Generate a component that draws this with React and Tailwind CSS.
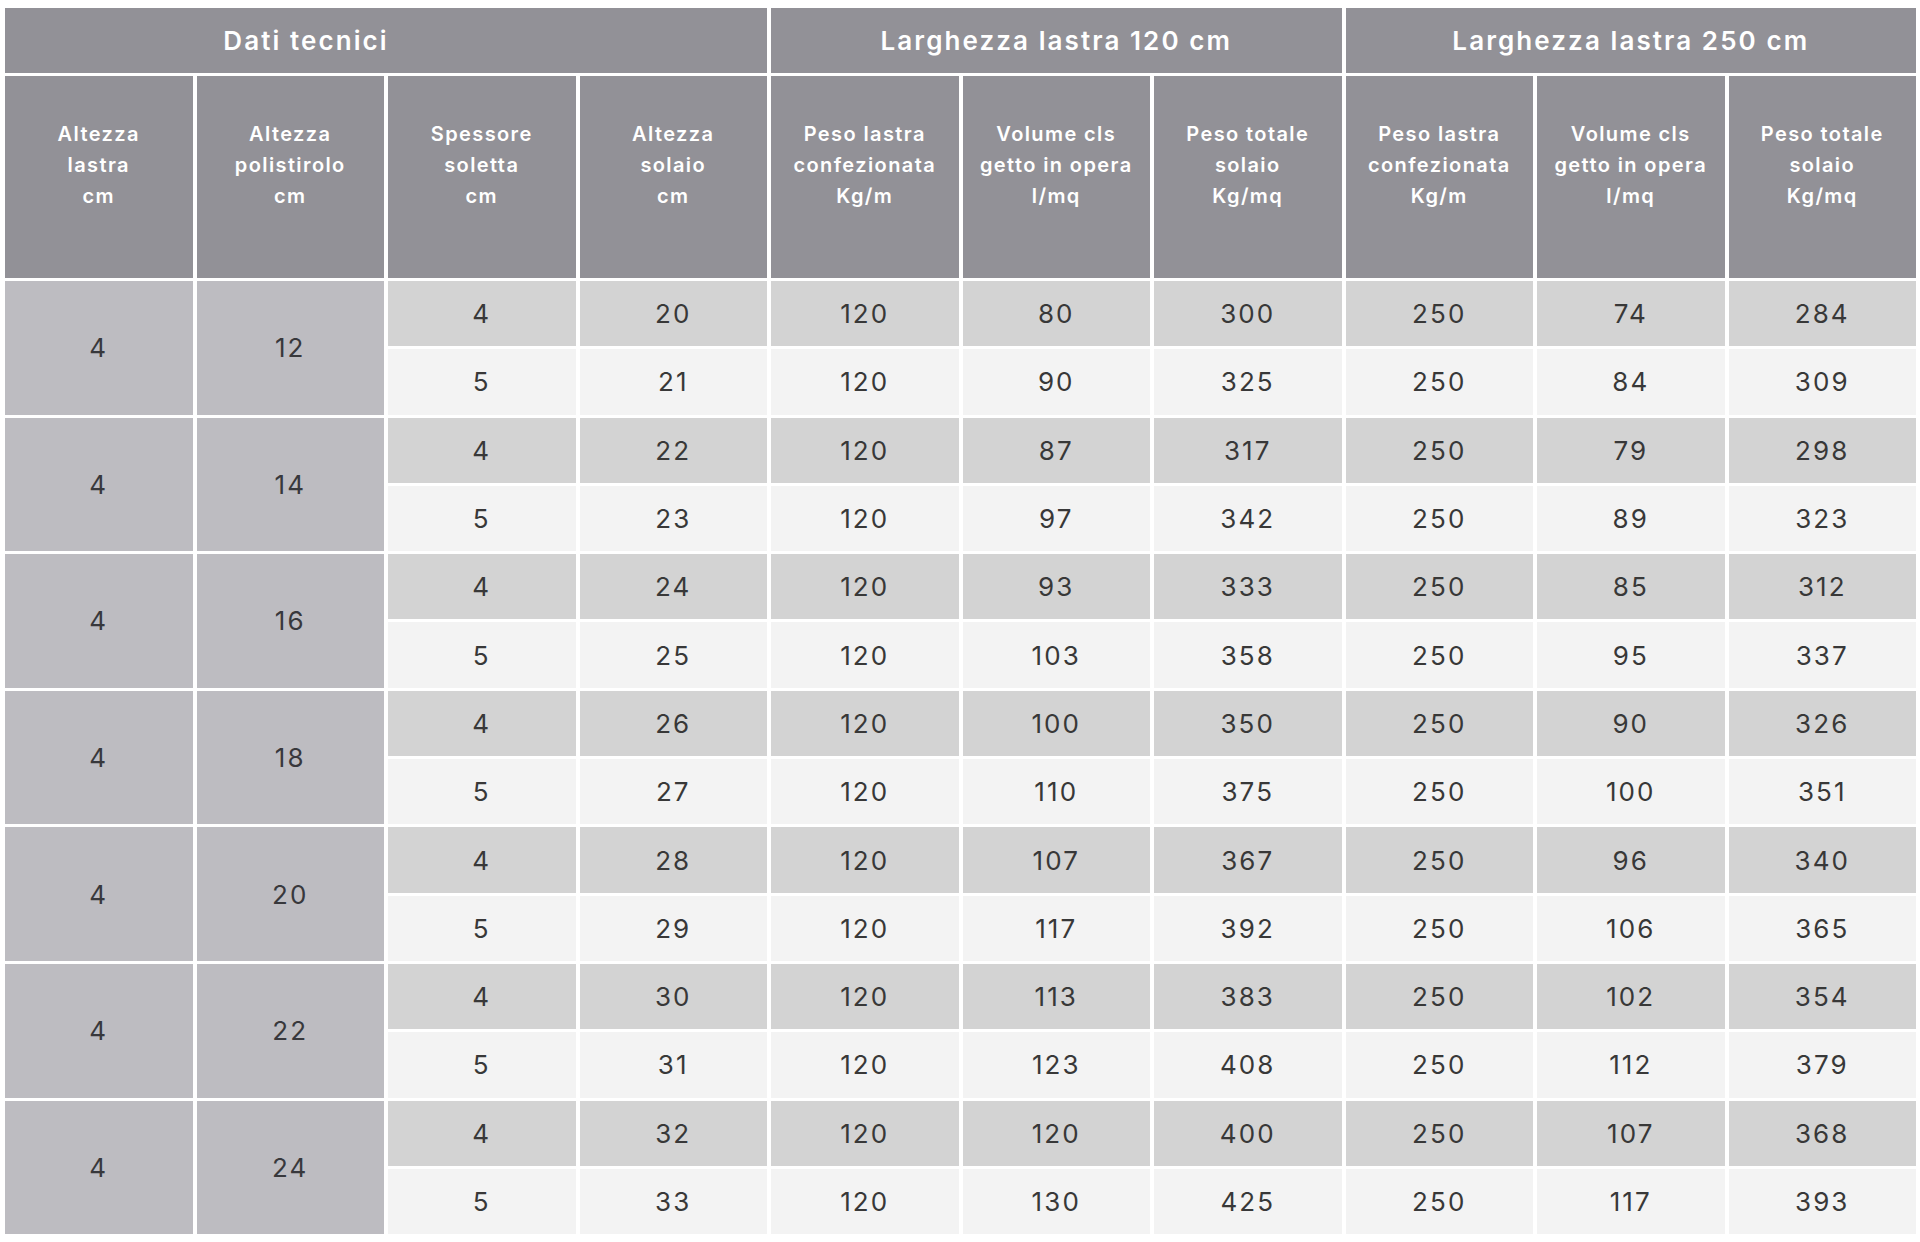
import React from "react";

const groups = [
  { a: 4, b: 12, rows: [[4, 20, 120, 80, 300, 250, 74, 284], [5, 21, 120, 90, 325, 250, 84, 309]] },
  { a: 4, b: 14, rows: [[4, 22, 120, 87, 317, 250, 79, 298], [5, 23, 120, 97, 342, 250, 89, 323]] },
  { a: 4, b: 16, rows: [[4, 24, 120, 93, 333, 250, 85, 312], [5, 25, 120, 103, 358, 250, 95, 337]] },
  { a: 4, b: 18, rows: [[4, 26, 120, 100, 350, 250, 90, 326], [5, 27, 120, 110, 375, 250, 100, 351]] },
  { a: 4, b: 20, rows: [[4, 28, 120, 107, 367, 250, 96, 340], [5, 29, 120, 117, 392, 250, 106, 365]] },
  { a: 4, b: 22, rows: [[4, 30, 120, 113, 383, 250, 102, 354], [5, 31, 120, 123, 408, 250, 112, 379]] },
  { a: 4, b: 24, rows: [[4, 32, 120, 120, 400, 250, 107, 368], [5, 33, 120, 130, 425, 250, 117, 393]] },
];

const subHeaders = [
  ["Altezza", "lastra", "cm"],
  ["Altezza", "polistirolo", "cm"],
  ["Spessore", "soletta", "cm"],
  ["Altezza", "solaio", "cm"],
  ["Peso lastra", "confezionata", "Kg/m"],
  ["Volume cls", "getto in opera", "l/mq"],
  ["Peso totale", "solaio", "Kg/mq"],
  ["Peso lastra", "confezionata", "Kg/m"],
  ["Volume cls", "getto in opera", "l/mq"],
  ["Peso totale", "solaio", "Kg/mq"],
];

const font = { fontFamily: "Inter, 'DejaVu Sans', sans-serif" };

export default function App() {
  return (
    <div className="w-[1920px] h-[1242px] bg-white pt-[8px] pl-[5px]" style={font}>
      <div className="w-[1911px] grid grid-cols-10 gap-x-[4px] gap-y-[3px] grid-rows-[65px_202px_repeat(14,65.3px)]">
        <div className="col-span-4 bg-[#929197] flex items-center justify-center pr-[160px] text-white text-[26px] font-semibold tracking-[0.08em]">
          Dati tecnici
        </div>
        <div className="col-span-3 bg-[#929197] flex items-center justify-center text-white text-[26px] font-semibold tracking-[0.08em]">
          Larghezza lastra 120 cm
        </div>
        <div className="col-span-3 bg-[#929197] flex items-center justify-center text-white text-[26px] font-semibold tracking-[0.08em]">
          Larghezza lastra 250 cm
        </div>

        {subHeaders.map((lines, i) => (
          <div
            key={i}
            className="bg-[#929197] flex flex-col items-center pt-[43px] text-white text-[20px] font-semibold leading-[31px] tracking-[0.07em] text-center"
          >
            {lines.map((l, j) => (
              <span key={j} className="whitespace-nowrap">{l}</span>
            ))}
          </div>
        ))}

        {groups.map((g, gi) => (
          <React.Fragment key={gi}>
            <div className="row-span-2 bg-[#bdbcc1] flex items-center justify-center text-[#38383c] text-[26px] tracking-[0.08em]">
              {g.a}
            </div>
            <div className="row-span-2 bg-[#bdbcc1] flex items-center justify-center text-[#38383c] text-[26px] tracking-[0.08em]">
              {g.b}
            </div>
            {g.rows[0].map((v, i) => (
              <div
                key={"a" + i}
                className="bg-[#d3d3d3] flex items-center justify-center text-[#383838] text-[26px] tracking-[0.08em]"
              >
                {v}
              </div>
            ))}
            {g.rows[1].map((v, i) => (
              <div
                key={"b" + i}
                className="bg-[#f3f3f3] flex items-center justify-center text-[#383838] text-[26px] tracking-[0.08em]"
              >
                {v}
              </div>
            ))}
          </React.Fragment>
        ))}
      </div>
    </div>
  );
}
